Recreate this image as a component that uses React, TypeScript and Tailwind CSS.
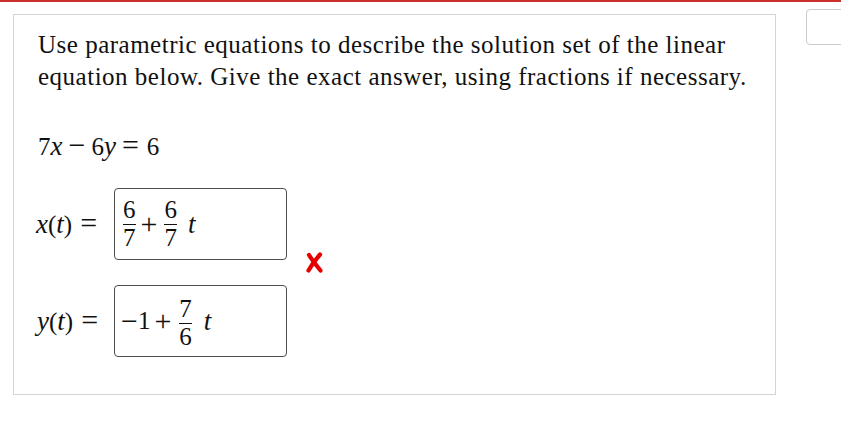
import type { ReactNode } from 'react';
import clsx from 'clsx';

// Operador matemático un poco más grande (como en Computer Modern)
const Op = ({ children, className }: { children: ReactNode; className?: string }) => (
  <span className={clsx("text-[30px] font-normal not-italic font-['Liberation_Serif',serif]", className)}>{children}</span>
);

// Variable en cursiva
const V = ({ children, className }: { children: ReactNode; className?: string }) => (
  <i className={clsx("text-[27px] italic font-['Liberation_Serif',serif]", className)}>{children}</i>
);

// Fracción apilada: numerador, barra, denominador
const Frac = ({ num, den }: { num: ReactNode; den: ReactNode }) => (
  <span className="inline-flex flex-col items-stretch text-[25px] font-['Liberation_Serif',serif]">
    <span className="block text-center leading-[24px] pb-[2px]">{num}</span>
    <span className="block h-px bg-[#111]" />
    <span className="block text-center leading-[24px] pt-[1px]">{den}</span>
  </span>
);

const AnswerBox = ({ children, className }: { children: ReactNode; className?: string }) => (
  <div className={clsx('flex items-center w-[173px] h-[72px] border border-[#4d4d4d] rounded-[4px] bg-white', className)}>
    {children}
  </div>
);

const WrongMark = () => (
  <svg width="17" height="21" viewBox="0 0 17 21" className="block">
    <path d="M3 3 C6 8, 10 13, 14.5 18.5" stroke="#e60000" strokeWidth="4.2" strokeLinecap="round" fill="none" />
    <path d="M14 2.5 C10 7, 6 12, 2.5 18.5" stroke="#e60000" strokeWidth="4.2" strokeLinecap="round" fill="none" />
  </svg>
);

export default function App() {
  return (
    <div className="w-[841px] h-[421px] overflow-hidden bg-white border-t-2 border-[#c9302c] font-['Liberation_Serif',serif] text-[#111]">
      <div className="flex items-start">
        {/* Tarjeta de la pregunta */}
        <div className="ml-[13px] mt-[12px] w-[763px] h-[381px] shrink-0 border border-[#d4d4d4] pl-[24px] pt-[14px]">
          <p className="text-[25px] leading-[32px] tracking-[0.5px] whitespace-nowrap">
            Use parametric equations to describe the solution set of the linear
            <br />
            equation below. Give the exact answer, using fractions if necessary.
          </p>

          <div className="mt-[36px] h-[32px] text-[25px] leading-[32px] whitespace-nowrap">
            7<V>x</V>
            <Op className="ml-[6px] mr-[6px]">−</Op>
            6<V>y</V>
            <Op className="ml-[6px] mr-[8px]">=</Op>6
          </div>

          <div className="flex items-start mt-[27px]">
            <div className="flex flex-col gap-[25px]">
              {/* x(t) */}
              <div className="flex items-center h-[72px] text-[25px] leading-[32px] whitespace-nowrap">
                <div className="w-[76px] -ml-[2px]">
                  <V>x</V>(<V>t</V>)<Op className="ml-[8px]">=</Op>
                </div>
                <AnswerBox className="ml-[2px] pl-[8px]">
                  <Frac num="6" den="7" />
                  <Op className="ml-[5px] mr-[7px]">+</Op>
                  <Frac num="6" den="7" />
                  <V className="ml-[11px]">t</V>
                </AnswerBox>
              </div>

              {/* y(t) */}
              <div className="flex items-center h-[72px] text-[25px] leading-[32px] whitespace-nowrap">
                <div className="w-[76px] -ml-[1px]">
                  <V>y</V>(<V>t</V>)<Op className="ml-[8px]">=</Op>
                </div>
                <AnswerBox className="ml-[1px] pl-[6px]">
                  <Op>−</Op>
                  <span>1</span>
                  <Op className="ml-[4px]">+</Op>
                  <span className="ml-[8px]"><Frac num="7" den="6" /></span>
                  <V className="ml-[12px]">t</V>
                </AnswerBox>
              </div>
            </div>

            <div className="ml-[19px] mt-[64px]">
              <WrongMark />
            </div>
          </div>
        </div>

        {/* Caja lateral */}
        <div className="ml-[30px] mt-[7px] w-[60px] h-[36px] shrink-0 border border-[#cccccc] rounded-[4px] bg-white" />
      </div>
    </div>
  );
}
